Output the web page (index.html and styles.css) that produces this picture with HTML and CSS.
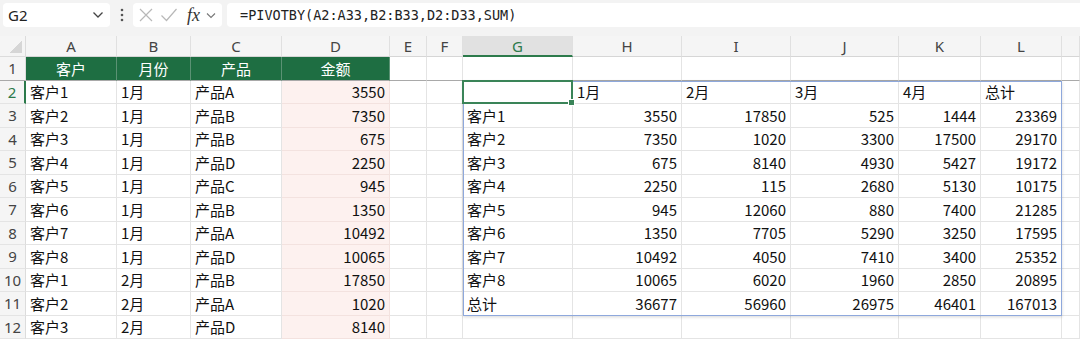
FILE: index.html
```html
<!DOCTYPE html>
<html lang="zh-CN">
<head>
  <meta charset="UTF-8" />
  <title>PIVOTBY</title>
  <link rel="stylesheet" href="styles.css">
</head>
<body>

  <div class="toolbar">
    <div class="namebox">
      <span>G2</span>
      <svg width="12" height="8" viewBox="0 0 12 8"><polyline points="1.5,1.5 6,6 10.5,1.5" fill="none" stroke="#444" stroke-width="1.3"/></svg>
    </div>
    <div class="dots">
      <svg width="4" height="14" viewBox="0 0 4 14"><circle cx="2" cy="2" r="1.3" fill="#555"/><circle cx="2" cy="7" r="1.3" fill="#555"/><circle cx="2" cy="12" r="1.3" fill="#555"/></svg>
    </div>
    <div class="fxbox">
      <svg width="16" height="16" viewBox="0 0 16 16"><path d="M2 2 L14 14 M14 2 L2 14" stroke="#b8b8b8" stroke-width="1.2" fill="none"/></svg>
      <svg width="18" height="16" viewBox="0 0 18 16"><polyline points="1.5,8.5 6.5,13.5 16.5,2" stroke="#b8b8b8" stroke-width="1.2" fill="none"/></svg>
      <span class="fx">fx</span>
      <svg width="10" height="7" viewBox="0 0 10 7"><polyline points="1,1.5 5,5.5 9,1.5" fill="none" stroke="#777" stroke-width="1.1"/></svg>
    </div>
    <div class="formula">=PIVOTBY(A2:A33,B2:B33,D2:D33,SUM)</div>
  </div>

  <div class="sheet">
    <!-- 列标题 -->
    <div class="corner"><span class="tri"></span></div>
    <div class="ch">A</div><div class="ch">B</div><div class="ch">C</div><div class="ch">D</div>
    <div class="ch">E</div><div class="ch">F</div><div class="ch sel">G</div><div class="ch">H</div>
    <div class="ch">I</div><div class="ch">J</div><div class="ch">K</div><div class="ch">L</div><div class="ch"></div>

    <!-- 1 -->
    <div class="rh">1</div>
    <div class="c hd">客户</div><div class="c hd">月份</div><div class="c hd">产品</div><div class="c hd">金额</div>
    <div class="c fr"></div><div class="c fr"></div><div class="c fr"></div><div class="c fr"></div><div class="c fr"></div>
    <div class="c fr"></div><div class="c fr"></div><div class="c fr"></div><div class="c fr"></div>

    <!-- 2 -->
    <div class="rh sel">2</div>
    <div class="c">客户1</div><div class="c">1月</div><div class="c">产品A</div><div class="c amt">3550</div>
    <div class="c"></div><div class="c"></div><div class="c"></div><div class="c">1月</div><div class="c">2月</div>
    <div class="c">3月</div><div class="c">4月</div><div class="c">总计</div><div class="c"></div>

    <!-- 3 -->
    <div class="rh">3</div>
    <div class="c">客户2</div><div class="c">1月</div><div class="c">产品B</div><div class="c amt">7350</div>
    <div class="c"></div><div class="c"></div><div class="c">客户1</div><div class="c n">3550</div><div class="c n">17850</div>
    <div class="c n">525</div><div class="c n">1444</div><div class="c n">23369</div><div class="c"></div>

    <!-- 4 -->
    <div class="rh">4</div>
    <div class="c">客户3</div><div class="c">1月</div><div class="c">产品B</div><div class="c amt">675</div>
    <div class="c"></div><div class="c"></div><div class="c">客户2</div><div class="c n">7350</div><div class="c n">1020</div>
    <div class="c n">3300</div><div class="c n">17500</div><div class="c n">29170</div><div class="c"></div>

    <!-- 5 -->
    <div class="rh">5</div>
    <div class="c">客户4</div><div class="c">1月</div><div class="c">产品D</div><div class="c amt">2250</div>
    <div class="c"></div><div class="c"></div><div class="c">客户3</div><div class="c n">675</div><div class="c n">8140</div>
    <div class="c n">4930</div><div class="c n">5427</div><div class="c n">19172</div><div class="c"></div>

    <!-- 6 -->
    <div class="rh">6</div>
    <div class="c">客户5</div><div class="c">1月</div><div class="c">产品C</div><div class="c amt">945</div>
    <div class="c"></div><div class="c"></div><div class="c">客户4</div><div class="c n">2250</div><div class="c n">115</div>
    <div class="c n">2680</div><div class="c n">5130</div><div class="c n">10175</div><div class="c"></div>

    <!-- 7 -->
    <div class="rh">7</div>
    <div class="c">客户6</div><div class="c">1月</div><div class="c">产品B</div><div class="c amt">1350</div>
    <div class="c"></div><div class="c"></div><div class="c">客户5</div><div class="c n">945</div><div class="c n">12060</div>
    <div class="c n">880</div><div class="c n">7400</div><div class="c n">21285</div><div class="c"></div>

    <!-- 8 -->
    <div class="rh">8</div>
    <div class="c">客户7</div><div class="c">1月</div><div class="c">产品A</div><div class="c amt">10492</div>
    <div class="c"></div><div class="c"></div><div class="c">客户6</div><div class="c n">1350</div><div class="c n">7705</div>
    <div class="c n">5290</div><div class="c n">3250</div><div class="c n">17595</div><div class="c"></div>

    <!-- 9 -->
    <div class="rh">9</div>
    <div class="c">客户8</div><div class="c">1月</div><div class="c">产品D</div><div class="c amt">10065</div>
    <div class="c"></div><div class="c"></div><div class="c">客户7</div><div class="c n">10492</div><div class="c n">4050</div>
    <div class="c n">7410</div><div class="c n">3400</div><div class="c n">25352</div><div class="c"></div>

    <!-- 10 -->
    <div class="rh">10</div>
    <div class="c">客户1</div><div class="c">2月</div><div class="c">产品B</div><div class="c amt">17850</div>
    <div class="c"></div><div class="c"></div><div class="c">客户8</div><div class="c n">10065</div><div class="c n">6020</div>
    <div class="c n">1960</div><div class="c n">2850</div><div class="c n">20895</div><div class="c"></div>

    <!-- 11 -->
    <div class="rh">11</div>
    <div class="c">客户2</div><div class="c">2月</div><div class="c">产品A</div><div class="c amt">1020</div>
    <div class="c"></div><div class="c"></div><div class="c">总计</div><div class="c n">36677</div><div class="c n">56960</div>
    <div class="c n">26975</div><div class="c n">46401</div><div class="c n">167013</div><div class="c"></div>

    <!-- 12 -->
    <div class="rh">12</div>
    <div class="c">客户3</div><div class="c">2月</div><div class="c">产品D</div><div class="c amt">8140</div>
    <div class="c"></div><div class="c"></div><div class="c"></div><div class="c"></div><div class="c"></div>
    <div class="c"></div><div class="c"></div><div class="c"></div><div class="c"></div>

    <!-- 溢出区域和活动单元格 -->
    <div class="spill"></div>
    <div class="active"><span class="handle"></span></div>
  </div>

</body>
</html>
```

FILE: styles.css
```css
body {
  margin: 0;
  background: #f3f3f3;
  font-family: "Noto Sans CJK SC", sans-serif;
  overflow: hidden;
}
.toolbar {
  display: flex;
  align-items: center;
  height: 24px;
  padding: 3px 0 9px 3px;
}
.namebox {
  box-sizing: border-box;
  width: 107px;
  height: 24px;
  background: #fff;
  border-radius: 4px;
  display: flex;
  align-items: center;
  justify-content: space-between;
  padding: 0 6px 0 5px;
  font: 15px "Noto Sans", sans-serif;
  color: #222;
}
.dots {
  width: 23px;
  display: flex;
  justify-content: center;
}
.fxbox {
  box-sizing: border-box;
  width: 89px;
  height: 24px;
  background: #fff;
  border-radius: 4px;
  display: flex;
  align-items: center;
  gap: 6px;
  padding-left: 5px;
}
.fx {
  font: italic 18px "Liberation Serif", serif;
  color: #333;
  margin-left: 3px;
}
.formula {
  flex: 1;
  height: 24px;
  margin-left: 5px;
  background: #fff;
  border-radius: 4px 0 0 4px;
  padding-left: 13px;
  display: flex;
  align-items: center;
  font: 13.5px "DejaVu Sans Mono", monospace;
  color: #222;
}

.sheet {
  position: relative;
  display: grid;
  grid-template-columns: 26px 91px 74px 91px 108px 37px 36px 110px 109px 109px 108px 82px 81px 1fr;
  grid-template-rows: 21px repeat(12, 23.5px);
  background: #fff;
}
.sheet > div {
  box-sizing: border-box;
}
.corner {
  background: #f5f5f5;
  border-right: 1px solid #dcdcdc;
  border-bottom: 1px solid #dcdcdc;
  display: flex;
  align-items: flex-end;
  justify-content: flex-end;
  padding: 0 3px 3px 0;
}
.tri {
  width: 13px;
  height: 13px;
  background: linear-gradient(to bottom right, transparent 50%, #d6d6d6 50%);
}
.ch {
  background: #f5f5f5;
  border-right: 1px solid #e0e0e0;
  border-bottom: 1px solid #d6d6d6;
  display: flex;
  align-items: center;
  justify-content: center;
  font: 15px "Noto Sans", sans-serif;
  color: #444;
}
.ch.sel {
  background: #e1e1e1;
  color: #2c7a4b;
  border-bottom: 2px solid #2c7a4b;
}
.rh {
  background: #f5f5f5;
  border-right: 1px solid #dcdcdc;
  border-bottom: 1px solid #e4e4e4;
  display: flex;
  align-items: center;
  justify-content: center;
  font: 15px "Noto Sans", sans-serif;
  color: #444;
}
.rh.sel {
  color: #2c7a4b;
  border-right: 2px solid #2c7a4b;
}
.c {
  border-right: 1px solid #e4e4e4;
  border-bottom: 1px solid #e4e4e4;
  display: flex;
  align-items: center;
  padding: 0 4px;
  font-size: 15px;
  color: #111;
  white-space: nowrap;
  overflow: hidden;
}
.c.n {
  justify-content: flex-end;
}
.c.hd {
  background: #1e6e42;
  border-right-color: #5b9274;
  color: #fff;
  justify-content: center;
}
.c.amt {
  background: #fdf1ef;
  border-right-color: #f3e2df;
  border-bottom-color: #f3e2df;
  justify-content: flex-end;
}
.c.hd, .c.fr, .rh:nth-child(15) {
  border-bottom: 1px solid #a9a9a9;
}

.spill {
  position: absolute;
  inset: 0;
  grid-area: 3 / 8 / 13 / 14;
  border: 1px solid #8ea8dc;
  box-shadow: 0 1px 3px rgba(0, 0, 0, 0.16);
  pointer-events: none;
}
.active {
  position: absolute;
  inset: -1px 0 0 -1px;
  grid-area: 3 / 8 / 4 / 9;
  border: 2px solid #3a8458;
}
.handle {
  position: absolute;
  right: -4px;
  bottom: -4px;
  width: 5px;
  height: 5px;
  background: #3a8458;
  border: 1px solid #fff;
}
```
